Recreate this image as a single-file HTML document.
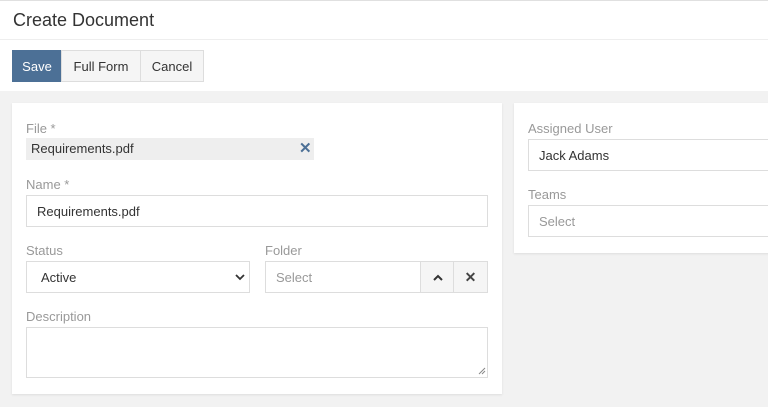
<!DOCTYPE html><html><head><style>
*{box-sizing:border-box;margin:0;padding:0}
body{width:768px;height:407px;overflow:hidden;background:#f2f2f2;font-family:"Liberation Sans",sans-serif;font-size:13px;color:#333;position:relative}
.a{position:absolute}
.lbl{position:absolute;color:#999;font-size:13px}
.in{position:absolute;background:#fff;border:1px solid #ddd;padding-left:10px;display:flex;align-items:center;font-size:13px}
.btn{position:absolute;top:50px;height:32px;border:1px solid #ddd;background:#f5f5f5;display:flex;align-items:center;justify-content:center;font-size:13px;color:#333}
</style></head><body>
<div class="a" style="left:0;top:0;width:768px;height:91px;background:#fff;border-top:1px solid #e0e0e0"></div>
<div class="a" style="left:0;top:39px;width:768px;height:1px;background:#eee"></div>
<div class="a" style="left:13px;top:10px;font-size:18px;color:#333">Create Document</div>
<div class="btn" style="left:12px;width:50px;background:#4c7096;border-color:#4c7096;color:#fff">Save</div>
<div class="btn" style="left:61px;width:80px">Full Form</div>
<div class="btn" style="left:140px;width:64px">Cancel</div>
<div class="a" style="left:12px;top:103px;width:490px;height:291px;background:#fff;box-shadow:0 1px 2px #ddd"></div>
<div class="a" style="left:514px;top:103px;width:260px;height:150px;background:#fff;box-shadow:0 1px 2px #ddd"></div>
<div class="lbl" style="left:26px;top:121px">File *</div>
<div class="a" style="left:26px;top:138px;width:288px;height:22px;background:#eee;padding-left:5px;line-height:22px">Requirements.pdf</div>
<div class="a" style="left:299px;top:138px;line-height:22px;color:#4c7096;font-weight:bold;font-size:15px">✕</div>
<div class="lbl" style="left:26px;top:177px">Name *</div>
<div class="in" style="left:26px;top:195px;width:462px;height:32px">Requirements.pdf</div>
<div class="lbl" style="left:26px;top:243px">Status</div>
<div class="in" style="left:26px;top:261px;width:224px;height:32px;padding-left:14px">Active<svg class="a" style="left:208px;top:12px" width="10" height="7"><path d="M1 1l4 4 4-4" stroke="#333" stroke-width="1.8" fill="none"/></svg></div>
<div class="lbl" style="left:265px;top:243px">Folder</div>
<div class="in" style="left:265px;top:261px;width:223px;height:32px;color:#999">Select</div>
<div class="a" style="left:420px;top:262px;width:34px;height:30px;background:#f5f5f5;border-left:1px solid #ddd;border-right:1px solid #ddd"><svg class="a" style="left:12px;top:12px" width="10" height="7"><path d="M1 6l4-4 4 4" stroke="#333" stroke-width="2" fill="none"/></svg></div>
<div class="a" style="left:454px;top:262px;width:33px;height:30px;background:#f5f5f5;text-align:center;line-height:30px;font-weight:bold;font-size:14px;color:#444">✕</div>
<div class="lbl" style="left:26px;top:309px">Description</div>
<div class="in" style="left:26px;top:327px;width:462px;height:51px"><svg class="a" style="left:451px;top:39px" width="8" height="8"><path d="M1 7L7 1M4 7L7 4" stroke="#888" stroke-width="1"/></svg></div>
<div class="lbl" style="left:528px;top:121px">Assigned User</div>
<div class="in" style="left:528px;top:139px;width:250px;height:32px">Jack Adams</div>
<div class="lbl" style="left:528px;top:187px">Teams</div>
<div class="in" style="left:528px;top:205px;width:250px;height:32px;color:#999">Select</div>
</body></html>
